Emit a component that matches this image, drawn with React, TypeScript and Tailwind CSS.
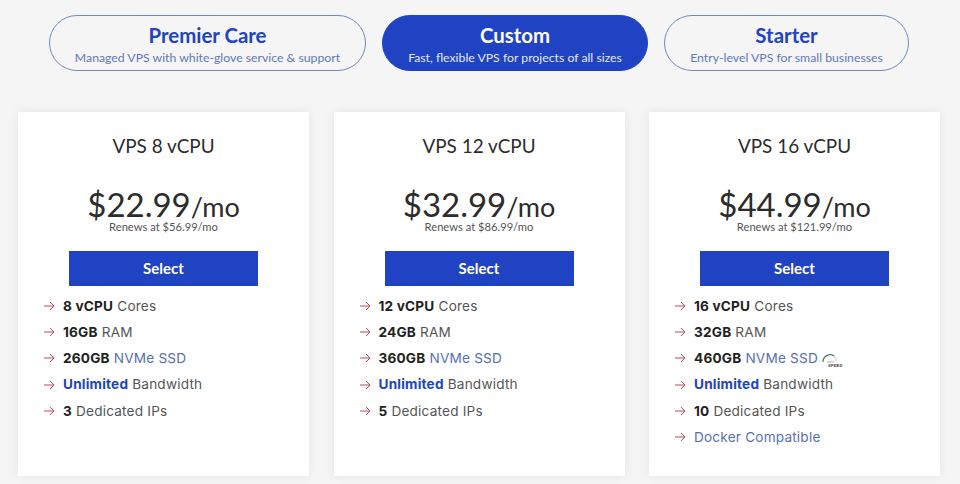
import React from 'react';

const heading = "font-['Lato',sans-serif]";
const body = "font-['Inter',sans-serif]";

const Arrow = () => (
  <svg className="w-[11px] h-[10px] shrink-0" viewBox="0 0 11 10" fill="none" stroke="#c0485c" strokeWidth={1}>
    <path d="M0 5h10M6 1l4 4-4 4" />
  </svg>
);

const SpeedIcon = () => (
  <svg className="inline-block align-middle w-[24px] h-[16px] ml-[3px]" viewBox="0 0 24 16" fill="none">
    <path d="M2 10a7 7 0 0 1 11 -6" stroke="#4f7f62" strokeWidth={1.3} />
    <path d="M13 4a7 7 0 0 1 2 5" stroke="#d3d3d3" strokeWidth={1.3} />
    <path d="M6 10h7" stroke="#9fb5a6" strokeWidth={1} />
    <text x="7" y="15" fontSize="4" fontWeight="700" fontStyle="italic" fontFamily="Liberation Sans, sans-serif" fill="#333">SPEED</text>
  </svg>
);

const Pill = ({ title, sub, width, active }: { title: string; sub: string; width: string; active?: boolean }) => (
  <div
    className={`${width} h-[56px] rounded-full border flex flex-col items-center pt-[6px] ${heading} ${
      active ? 'bg-[#2043c4] border-[#2043c4] text-white' : 'border-[#7288c4] text-[#2043c4]'
    }`}
  >
    <div className="text-[20.400px] leading-[26px] font-bold">{title}</div>
    <div className={`text-[12.250px] leading-[18px] mt-[1px] ${active ? 'text-[#e4e8f8]' : 'text-[#6178bd]'}`}>{sub}</div>
  </div>
);

const Feature = ({ children }: { children: React.ReactNode }) => (
  <li className="flex items-center h-[26.200px] gap-[8px]">
    <Arrow />
    <span className="block whitespace-pre">{children}</span>
  </li>
);

const B = ({ children }: { children: React.ReactNode }) => <b className="font-bold text-[#222]">{children}</b>;
const Link = ({ children }: { children: React.ReactNode }) => <span className="text-[#5570b5]">{children}</span>;

const Card = ({
  name, price, renews, features,
}: { name: string; price: string; renews: string; features: React.ReactNode[] }) => (
  <div className="w-[291px] h-[364px] bg-white shadow-[0_0_10px_rgba(0,0,0,0.07)] flex flex-col items-center pt-[21px]">
    <div className={`${heading} text-[18.900px] leading-[26px] text-[#2c2c2c]`}>{name}</div>
    <div className={`${heading} mt-[29px] text-[33px] leading-[32px] text-[#2c2c2c]`}>
      {price}<span className="text-[27px] leading-none">/mo</span>
    </div>
    <div className={`${heading} mt-[1px] text-[11.200px] leading-[12px] text-[#555]`}>{renews}</div>
    <button className={`${heading} mt-[18px] w-[189px] h-[35px] bg-[#2043c4] text-white text-[15px] font-bold`}>Select</button>
    <ul className={`${body} self-start pl-[26px] mt-[7px] text-[13.600px] tracking-[0.2px] text-[#555]`}>
      {features.map((f, i) => <Feature key={i}>{f}</Feature>)}
    </ul>
  </div>
);

export default function App() {
  return (
    <div className="w-[960px] h-[484px] bg-[#f5f5f5] overflow-hidden">
      <div className="flex pt-[15px] pl-[49px] gap-[16px]">
        <Pill width="w-[317px]" title="Premier Care" sub="Managed VPS with white-glove service & support" />
        <Pill width="w-[266px]" active title="Custom" sub="Fast, flexible VPS for projects of all sizes" />
        <Pill width="w-[245px]" title="Starter" sub="Entry-level VPS for small businesses" />
      </div>
      <div className="flex pl-[18px] gap-[24.500px] mt-[41px]">
        <Card
          name="VPS 8 vCPU"
          price="$22.99"
          renews="Renews at $56.99/mo"
          features={[
            <><B>8 vCPU</B> Cores</>,
            <><B>16GB</B> RAM</>,
            <><B>260GB</B> <Link>NVMe SSD</Link></>,
            <><b className="font-bold text-[#2043c4]">Unlimited</b> Bandwidth</>,
            <><B>3</B> Dedicated IPs</>,
          ]}
        />
        <Card
          name="VPS 12 vCPU"
          price="$32.99"
          renews="Renews at $86.99/mo"
          features={[
            <><B>12 vCPU</B> Cores</>,
            <><B>24GB</B> RAM</>,
            <><B>360GB</B> <Link>NVMe SSD</Link></>,
            <><b className="font-bold text-[#2043c4]">Unlimited</b> Bandwidth</>,
            <><B>5</B> Dedicated IPs</>,
          ]}
        />
        <Card
          name="VPS 16 vCPU"
          price="$44.99"
          renews="Renews at $121.99/mo"
          features={[
            <><B>16 vCPU</B> Cores</>,
            <><B>32GB</B> RAM</>,
            <><B>460GB</B> <Link>NVMe SSD</Link><SpeedIcon /></>,
            <><b className="font-bold text-[#2043c4]">Unlimited</b> Bandwidth</>,
            <><B>10</B> Dedicated IPs</>,
            <Link>Docker Compatible</Link>,
          ]}
        />
      </div>
    </div>
  );
}
